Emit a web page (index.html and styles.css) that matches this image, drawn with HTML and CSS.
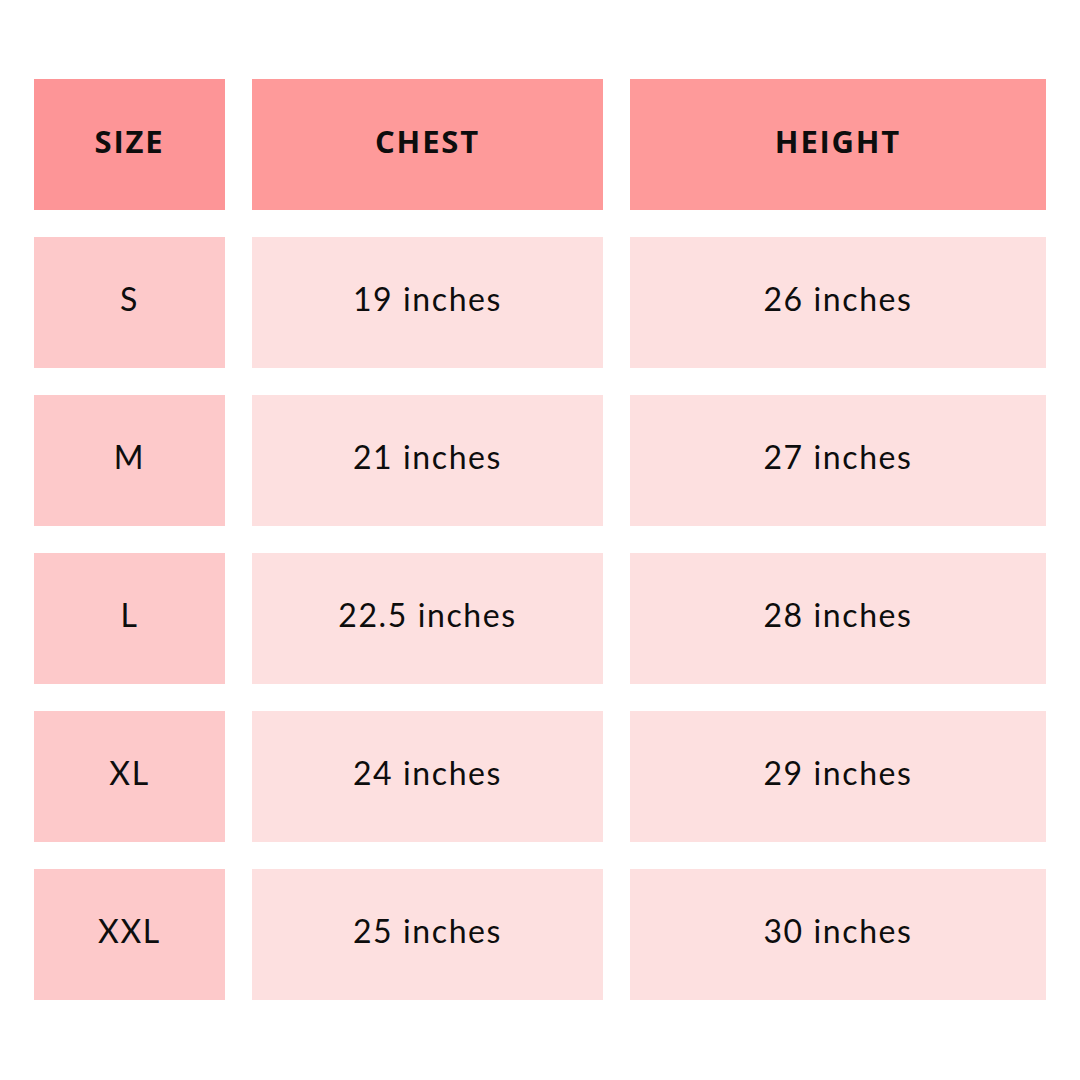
FILE: index.html
```html
<!DOCTYPE html>
<html>
<head>
<meta charset="utf-8">
<link rel="stylesheet" href="styles.css">
</head>
<body>
<div class="chart">
  <div class="cell head head-size">SIZE</div>
  <div class="cell head">CHEST</div>
  <div class="cell head">HEIGHT</div>

  <div class="cell size">S</div>
  <div class="cell val">19 inches</div>
  <div class="cell val">26 inches</div>

  <div class="cell size">M</div>
  <div class="cell val">21 inches</div>
  <div class="cell val">27 inches</div>

  <div class="cell size">L</div>
  <div class="cell val">22.5 inches</div>
  <div class="cell val">28 inches</div>

  <div class="cell size">XL</div>
  <div class="cell val">24 inches</div>
  <div class="cell val">29 inches</div>

  <div class="cell size">XXL</div>
  <div class="cell val">25 inches</div>
  <div class="cell val">30 inches</div>
</div>
</body>
</html>
```
FILE: styles.css
```css
html, body {
  margin: 0;
  padding: 0;
  background: #ffffff;
}
.chart {
  display: grid;
  grid-template-columns: 191px 351px 416px;
  grid-auto-rows: 131px;
  column-gap: 27px;
  row-gap: 27px;
  padding: 79px 0 0 34px;
  width: 1012px;
}
.cell {
  display: flex;
  align-items: center;
  justify-content: center;
  color: #0d0d0d;
  font-family: Lato, "Liberation Sans", sans-serif;
  font-size: 32px;
  letter-spacing: 1.6px;
  padding-bottom: 8px;
  box-sizing: border-box;
}
.head {
  background: #fe9a9a;
  font-family: "Open Sans", "Liberation Sans", sans-serif;
  font-weight: 700;
  font-size: 31px;
  letter-spacing: 1.8px;
  padding-bottom: 8px;
}
.head-size {
  background: #fd9597;
}
.size {
  background: #fdc9ca;
}
.val {
  background: #fde0e0;
}
```
